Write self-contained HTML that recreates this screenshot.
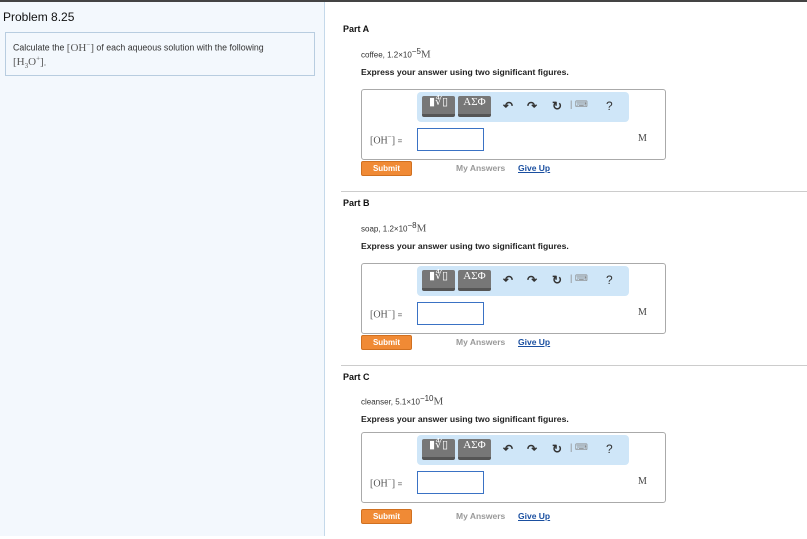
<!DOCTYPE html>
<html><head><meta charset="utf-8"><style>
*{margin:0;padding:0;box-sizing:border-box}
body{width:807px;height:536px;overflow:hidden;background:#fff;font-family:"Liberation Sans",Arial,sans-serif;position:relative;color:#222}
.topbar{position:absolute;left:0;top:0;width:807px;height:2px;background:#444}
.left{position:absolute;left:0;top:2px;width:325px;height:534px;background:#f3f8fd;border-right:1px solid #c5d9ea}
.title{position:absolute;left:3px;top:8px;font-size:12px;color:#111}
.pbox{position:absolute;left:5px;top:32px;width:310px;height:44px;border:1px solid #b8cde0;background:#f3f8fd;font-size:8.8px;color:#333;padding:6px 0 0 7px;line-height:11px}
.m{font-family:"Liberation Serif",serif;font-size:11px;color:#555}
.part{position:absolute;left:341px;width:466px;height:174px}
.sep{position:absolute;left:0;top:0;width:466px;height:1px;background:#ccc}
.ph{position:absolute;left:2px;font-size:9px;font-weight:bold;color:#111}
.q{position:absolute;left:20px;font-size:8px;color:#333}
.ex{position:absolute;left:20px;font-size:8.6px;font-weight:bold;color:#222}
.box{position:absolute;left:20px;width:305px;height:71px;border:1px solid #aaa;border-radius:3px;background:#fff}
.tb{position:absolute;left:55px;top:2px;width:212px;height:30px;background:#cfe6f8;border-radius:4px}
.btn{position:absolute;top:4px;width:33px;height:21px;background:#777;border-radius:2px;color:#fff;font-family:"Liberation Serif",serif;font-size:11px;line-height:12px;text-align:center;border-bottom:3px solid #555}
.ic{position:absolute;top:7px;font-size:12px;font-weight:bold;color:#333}
.lab{position:absolute;left:8px;top:43px;font-family:"Liberation Serif",serif;font-size:10px;color:#555}
.inp{position:absolute;left:55px;top:38px;width:67px;height:23px;border:1px solid #3a72c4}
.unit{position:absolute;left:276px;top:43px;font-family:"Liberation Serif",serif;font-size:10px;color:#444}
.sub{position:absolute;left:20px;width:51px;height:15px;background:#f08a35;border:1px solid #d07020;border-radius:2px;color:#fff;font-size:8px;font-weight:bold;text-align:center;line-height:13px}
.my{position:absolute;left:115px;font-size:8.5px;font-weight:bold;color:#999}
.gu{position:absolute;left:177px;font-size:8.5px;font-weight:bold;color:#1a4fa0;text-decoration:underline}
</style></head><body>
<div class="topbar"></div>
<div class="left">
<div class="title">Problem 8.25</div>
<div class="pbox" style="top:30px">Calculate the <span class="m">[OH<sup style="font-size:7px">−</sup>]</span> of each aqueous solution with the following<br><span class="m">[H<sub style="font-size:7px">3</sub>O<sup style="font-size:7px">+</sup>]</span>.</div>
</div>

<div class="part" style="top:17px">
<div class="ph" style="top:7px">Part A</div>
<div class="q" style="top:30px">coffee, 1.2×10<sup style="font-size:8px">−5</sup><span class="m">M</span></div>
<div class="ex" style="top:50px">Express your answer using two significant figures.</div>
<div class="box" style="top:72px">
<div class="tb"><div class="btn" style="left:5px">▮∜▯</div><div class="btn" style="left:41px">ΑΣΦ</div>
<div class="ic" style="left:86px">↶</div><div class="ic" style="left:110px">↷</div><div class="ic" style="left:135px">↻</div><div class="ic" style="left:153px;font-size:9px;font-weight:normal;color:#888">| ⌨</div><div class="ic" style="left:189px;font-weight:normal">?</div></div>
<div class="lab">[OH<sup style="font-size:7px">−</sup>] <span style="font-family:'Liberation Sans';font-size:8px">=</span></div>
<div class="inp"></div><div class="unit">M</div></div>
<div class="sub" style="top:144px">Submit</div>
<div class="my" style="top:146px">My Answers</div><div class="gu" style="top:146px">Give Up</div>
</div>

<div class="part" style="top:191px"><div class="sep"></div>
<div class="ph" style="top:7px">Part B</div>
<div class="q" style="top:30px">soap, 1.2×10<sup style="font-size:8px">−8</sup><span class="m">M</span></div>
<div class="ex" style="top:50px">Express your answer using two significant figures.</div>
<div class="box" style="top:72px">
<div class="tb"><div class="btn" style="left:5px">▮∜▯</div><div class="btn" style="left:41px">ΑΣΦ</div>
<div class="ic" style="left:86px">↶</div><div class="ic" style="left:110px">↷</div><div class="ic" style="left:135px">↻</div><div class="ic" style="left:153px;font-size:9px;font-weight:normal;color:#888">| ⌨</div><div class="ic" style="left:189px;font-weight:normal">?</div></div>
<div class="lab">[OH<sup style="font-size:7px">−</sup>] <span style="font-family:'Liberation Sans';font-size:8px">=</span></div>
<div class="inp"></div><div class="unit">M</div></div>
<div class="sub" style="top:144px">Submit</div>
<div class="my" style="top:146px">My Answers</div><div class="gu" style="top:146px">Give Up</div>
</div>

<div class="part" style="top:365px"><div class="sep"></div>
<div class="ph" style="top:7px">Part C</div>
<div class="q" style="top:29px">cleanser, 5.1×10<sup style="font-size:8px">−10</sup><span class="m">M</span></div>
<div class="ex" style="top:49px">Express your answer using two significant figures.</div>
<div class="box" style="top:67px">
<div class="tb"><div class="btn" style="left:5px">▮∜▯</div><div class="btn" style="left:41px">ΑΣΦ</div>
<div class="ic" style="left:86px">↶</div><div class="ic" style="left:110px">↷</div><div class="ic" style="left:135px">↻</div><div class="ic" style="left:153px;font-size:9px;font-weight:normal;color:#888">| ⌨</div><div class="ic" style="left:189px;font-weight:normal">?</div></div>
<div class="lab">[OH<sup style="font-size:7px">−</sup>] <span style="font-family:'Liberation Sans';font-size:8px">=</span></div>
<div class="inp"></div><div class="unit">M</div></div>
<div class="sub" style="top:144px">Submit</div>
<div class="my" style="top:146px">My Answers</div><div class="gu" style="top:146px">Give Up</div>
</div>
</body></html>
